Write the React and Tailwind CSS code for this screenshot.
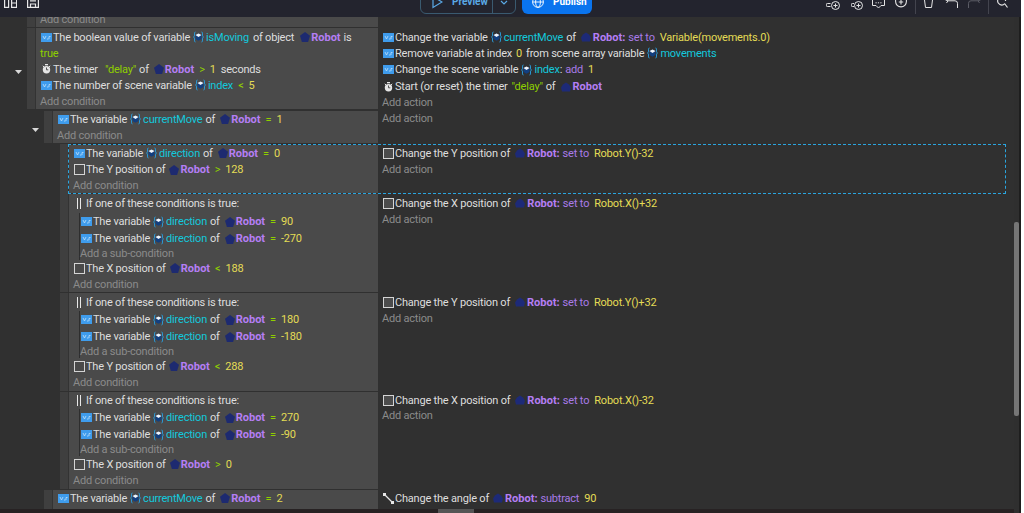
import React from "react";

const Var = () => (
  <svg width="11" height="9" viewBox="0 0 11 9" className="shrink-0 mr-[1px]">
    <rect width="11" height="9" fill="#3f9cec" />
    <path d="M2 3l1.500 3L5 3M6 6h1.500M8 6V3.500h1.500" fill="none" stroke="#bfe0fa" strokeWidth="0.8" />
  </svg>
);
const Brace = () => (
  <svg width="11" height="12" viewBox="0 0 11 12" className="shrink-0 ml-[3px] mr-[2px]">
    <path d="M2.500 1C1.200 1 1.500 2.500 1.500 4S1.200 5.600.5 6c.7.4 1 .5 1 2s-.3 3 1 3M8.500 1c1.300 0 1 1.500 1 3s.3 1.600 1 2c-.7.4-1 .5-1 2s.3 3-1 3" fill="none" stroke="#2a9ad8" strokeWidth="1" />
    <path d="M5.500 2.500 8.500 4v4l-3 1.800L2.500 8V4z" fill="#123f80" />
    <path d="M5.500 2.500 8.500 4 5.500 6 2.500 4z" fill="#f2f6fa" />
  </svg>
);
const Penta = () => (
  <svg width="10" height="10" viewBox="0 0 10 10" className="shrink-0 ml-[2px] mr-[1px]">
    <path d="M5 0 10 3.800 8.100 10H1.900L0 3.800z" fill="#1d2a70" />
  </svg>
);
const Blob = () => (
  <svg width="10" height="10" viewBox="0 0 10 10" className="shrink-0 mx-[2px]">
    <path d="M5 .5 8 2.500l2 3-1 4H1l-1-4 2-3z" fill="#1d2a78" />
  </svg>
);
const Timer = () => (
  <svg width="9" height="10" viewBox="0 0 9 10" className="shrink-0 ml-[1px] mr-[2px]">
    <circle cx="4.500" cy="5.800" r="3.700" fill="#e6e6e6" />
    <rect x="3" y="0" width="3" height="1.300" fill="#e6e6e6" />
    <path d="M.8 1.800 2 3M8.200 1.800 7 3" stroke="#e6e6e6" />
    <path d="M4.500 3.500v2.300h1.800" stroke="#555" fill="none" />
  </svg>
);
const Box = ({ grid }) => (
  <svg width="11" height="11" viewBox="0 0 11 11" className="shrink-0 mr-[1px]">
    {grid && <rect x="1" y="1" width="9" height="9" fill="#4c4c4c" />}
    <rect x="0.500" y="0.500" width="10" height="10" fill="none" stroke="#d4d4d4" />
  </svg>
);
const Angle = () => (
  <svg width="11" height="11" viewBox="0 0 11 11" className="shrink-0 mr-[1px]">
    <path d="M1.500 1.500 9.500 9.500" stroke="#e6e6e6" strokeWidth="1.200" />
    <rect x="0" y="0" width="3" height="3" fill="#e6e6e6" />
    <rect x="8" y="8" width="3" height="3" fill="#e6e6e6" />
  </svg>
);
const Arrow = ({ className }) => (
  <svg width="7" height="4" viewBox="0 0 7 4" className={`block ${className}`}>
    <path d="M0 0h7L3.500 4z" fill="#d8d8d8" />
  </svg>
);

const R = ({ colon }) => (
  <span className="font-bold tracking-normal text-[#b57ef5]">Robot{colon ? ":" : ""}</span>
);
const C = ({ children }) => <span className="text-[#13c8dc]">{children}</span>;
const Y = ({ children }) => <span className="text-[#e4dc55]">{children}</span>;
const Op = ({ children }) => <span className="text-[#8fcf00] mx-[5px]">{children}</span>;
const Str = () => <span className="text-[#8fcf00]">"delay"</span>;
const Of = () => <span className="mx-[3px]">of</span>;
const Act = ({ children }) => <span className="text-[#a97be8] ml-[3px] mr-[5px]">{children}</span>;

const Line = ({ h = 16, pl = 1, children, muted }) => (
  <div
    style={{ height: h, paddingLeft: pl }}
    className={`flex items-center whitespace-pre shrink-0 ${muted ? "text-[#8b8b8b]" : ""}`}
  >
    {children}
  </div>
);
const Muted = ({ h, children }) => (
  <Line h={h} pl={0} muted>{children}</Line>
);

const VarCond = ({ name, op, val }) => (
  <>
    <Var />
    <span>The variable</span>
    <Brace />
    <C>{name}</C>
    <Of />
    <Penta />
    <R />
    <Op>{op}</Op>
    <Y>{val}</Y>
  </>
);
const PosCond = ({ axis, op, val }) => (
  <>
    <Box />
    <span>The {axis} position of</span>
    <span className="w-[2px]" />
    <Penta />
    <R />
    <Op>{op}</Op>
    <Y>{val}</Y>
  </>
);
const PosAct = ({ axis, val }) => (
  <>
    <Box grid />
    <span>Change the {axis} position of</span>
    <span className="w-[3px]" />
    <Blob />
    <R colon />
    <Act>set to</Act>
    <Y>{val}</Y>
  </>
);

const Row = ({ left, conds, actions, h, gap = 1, selected, arrow }) => {
  const condW = 378 - left - 8;
  const body = (
    <>
      <div
        style={{ width: selected ? condW - 1 : condW, marginBottom: gap }}
        className={`shrink-0 bg-[#4a4a4a] flex flex-col overflow-hidden ${selected ? "" : "border-l border-[#333333]"}`}
      >
        {conds}
      </div>
      <div className="flex-1 flex flex-col pl-[4px] overflow-hidden min-w-0">{actions}</div>
    </>
  );
  return (
    <div style={{ height: h }} className="flex shrink-0">
      <div style={{ width: left }} className="shrink-0">{arrow}</div>
      <div style={{ marginBottom: gap }} className="w-[8px] shrink-0 bg-[#3f3f3f]" />
      {selected ? (
        <div className="flex-1 flex border border-dashed border-[#2aa5df] mr-[8px] min-w-0">{body}</div>
      ) : (
        body
      )}
    </div>
  );
};

const OrGroup = ({ first, af, last, a, b, c, d, op, actAxis, val }) => (
  <Row
    left={60}
    h={first + 17 + 17 + 13 + 16 + last + 1}
    conds={
      <div className="flex flex-col flex-1 pl-[4px]">
        <Line h={first}>
          <span className="w-[4px] h-[11px] border-x border-[#e8e8e8] ml-[3px] mr-[5px]" />
          <span>If one of these conditions is true:</span>
        </Line>
        <div className="border-l border-[#2e2e2e] ml-[6px] h-[47px]">
          <Line h={17}><VarCond name="direction" op="=" val={a} /></Line>
          <Line h={17}><VarCond name="direction" op="=" val={b} /></Line>
          <Muted h={13}>Add a sub-condition</Muted>
        </div>
        <Line h={16}><PosCond axis={c} op={op} val={d} /></Line>
        <Muted h={last}>Add condition</Muted>
      </div>
    }
    actions={
      <>
        <Line h={af}><PosAct axis={actAxis} val={val} /></Line>
        <Muted h={15}>Add action</Muted>
      </>
    }
  />
);

const App = () => (
  <div className="w-[1024px] h-[513px] overflow-hidden flex bg-white text-[#dedede] text-[11px] leading-none tracking-[-0.2px] font-['Roboto',sans-serif]">
    <div className="w-[1021px] h-full flex flex-col shrink-0 bg-[#303030]">
      <div className="h-[17px] shrink-0 bg-[#23242e] flex items-start overflow-hidden">
        <svg width="13" height="8" viewBox="0 0 13 8" className="ml-[4px] shrink-0" fill="none" stroke="#e8e8e8" strokeWidth="1.200">
          <path d="M.6 0v7.400h4V0M7.600 0v7.400h5V0M7.600 3h5" />
        </svg>
        <svg width="12" height="8" viewBox="0 0 12 8" className="ml-[10px] shrink-0" fill="none" stroke="#e8e8e8" strokeWidth="1.200">
          <path d="M.6 0v7.400h10.800V0M3.500 7.400V4h5v3.400M3 .8h6" />
        </svg>
        <div className="ml-[381px] -mt-[10px] w-[96px] h-[24px] shrink-0 border border-[#3a5a70] rounded-[6px] flex items-center">
          <svg width="11" height="14" viewBox="0 0 11 14" className="ml-[11px] shrink-0" fill="none" stroke="#5aa9e6" strokeWidth="1.200"><path d="M1 1.500 10 7 1 12.500z" /></svg>
          <span className="ml-[9px] w-[40px] font-bold tracking-normal text-[#5aa9e6] text-[10px]">Preview</span>
          <div className="w-px h-full bg-[#3a5a70]" />
          <svg width="8" height="5" viewBox="0 0 8 5" className="ml-[7px] shrink-0" fill="none" stroke="#5aa9e6" strokeWidth="1.200"><path d="M1 1l3 3 3-3" /></svg>
        </div>
        <div className="ml-[6px] -mt-[10px] w-[70px] h-[24px] shrink-0 bg-[#0a74ee] rounded-[6px] flex items-center">
          <svg width="12" height="12" viewBox="0 0 12 12" className="ml-[10px] shrink-0" fill="none" stroke="#fff" strokeWidth="0.9"><circle cx="6" cy="6" r="5.400" /><ellipse cx="6" cy="6" rx="2.400" ry="5.400" /><path d="M.6 6h10.800" /></svg>
          <span className="ml-[9px] font-bold tracking-normal text-white text-[10px]">Publish</span>
        </div>
        <svg width="14" height="9" viewBox="0 0 14 9" className="ml-[234px] mt-[1px] shrink-0" fill="none" stroke="#e4e4e4" strokeWidth="1"><path d="M4.500 2.500H1.500a1 1 0 0 0 0 3h3" /><circle cx="9.500" cy="4.500" r="4" /><path d="M7.500 4.500h4M9.500 2.500v4" /></svg>
        <svg width="12" height="9" viewBox="0 0 12 9" className="ml-[11px] mt-[1px] shrink-0" fill="none" stroke="#e4e4e4" strokeWidth="1"><path d="M3 2.500H1.500a1 1 0 0 0 0 3H3" /><circle cx="7.500" cy="4.500" r="4" /><path d="M5.500 4.500h4M7.500 2.500v4" /></svg>
        <svg width="13" height="9" viewBox="0 0 13 9" className="ml-[9px] shrink-0" fill="none" stroke="#e4e4e4" strokeWidth="1"><path d="M.5 0v5.500h3.500L6.500 8 9 5.500h3.500V0" /><path d="M3.500 2.800h1.200M5.900 2.800h1.200M8.300 2.800h1.200" /></svg>
        <svg width="12" height="8" viewBox="0 0 12 8" className="ml-[10px] shrink-0" fill="none" stroke="#e4e4e4" strokeWidth="1.100"><path d="M.6 0v1.500a5.400 5.400 0 0 0 10.800 0V0M6 0v4.500M3.800 2h4.400" /></svg>
        <div className="w-px h-[14px] bg-[#43444e] ml-[8px] shrink-0" />
        <svg width="9" height="8" viewBox="0 0 9 8" className="ml-[8px] shrink-0" fill="none" stroke="#e4e4e4" strokeWidth="1"><path d="M.5 0 1.500 7.500h6L8.500 0" /></svg>
        <svg width="13" height="8" viewBox="0 0 13 8" className="ml-[12px] shrink-0" fill="none" stroke="#e4e4e4" strokeWidth="1"><path d="M3 .8h7a2.500 2.500 0 0 1 2.500 2.500V8M.5 0 3 .8 1.500 3" /></svg>
        <svg width="13" height="8" viewBox="0 0 13 8" className="ml-[10px] shrink-0" fill="none" stroke="#5c5d66" strokeWidth="1"><path d="M.5 8V3.300A2.500 2.500 0 0 1 3 .8h7M12.500 0 10 .8 11.500 3" /></svg>
        <div className="w-px h-[14px] bg-[#43444e] ml-[7px] shrink-0" />
        <svg width="11" height="8" viewBox="0 0 11 8" className="ml-[8px] shrink-0" fill="none" stroke="#e4e4e4" strokeWidth="1.200"><path d="M.8 0a4 4 0 0 0 7 3.500M7.500 3.500 10.500 7.500M8.500 0v1" /></svg>
      </div>

      <div className="flex-1 flex min-h-0">
        <div className="w-[1014px] shrink-0 flex flex-col overflow-hidden bg-[#303030]">
          <div className="h-[11px] flex shrink-0 overflow-hidden">
            <div className="w-[27px] shrink-0" />
            <div className="w-[8px] h-[10px] bg-[#3f3f3f] shrink-0" />
            <div className="w-[343px] h-[10px] bg-[#4a4a4a] border-l border-[#333333] shrink-0 pl-[4px] flex flex-col justify-end">
              <Muted>Add condition</Muted>
            </div>
          </div>

          <Row
            left={27}
            gap={2}
            h={83}
            arrow={<Arrow className="ml-[15px] mt-[42px]" />}
            conds={
              <div className="pl-[4px] pt-[1px]">
                <Line><Var /><span>The boolean value of variable</span><Brace /><C>isMoving</C><span className="mx-[4px]">of object</span><Penta /><R /><span className="ml-[3px]">is</span></Line>
                <Line pl={0}><span className="text-[#8fcf00]">true</span></Line>
                <Line><Timer /><span>The timer</span><span className="w-[7px]" /><Str /><Of /><Penta /><R /><Op>&gt;</Op><Y>1</Y><span className="ml-[5px]">seconds</span></Line>
                <Line><Var /><span>The number of scene variable</span><Brace /><C>index</C><Op>&lt;</Op><Y>5</Y></Line>
                <Muted>Add condition</Muted>
              </div>
            }
            actions={
              <div className="pt-[1px]">
                <Line><Var /><span>Change the variable</span><Brace /><C>currentMove</C><Of /><Blob /><R colon /><Act>set to</Act><Y>Variable(movements.0)</Y></Line>
                <Line><Var /><span>Remove variable at index</span><span className="w-[4px]" /><Y>0</Y><span className="ml-[4px]">from scene array variable</span><Brace /><C>movements</C></Line>
                <Line h={17}><Var /><span>Change the scene variable</span><Brace /><C>index</C><span className="text-[#dedede]">:</span><Act>add</Act><Y>1</Y></Line>
                <Line h={17}><Timer /><span>Start (or reset) the timer</span><span className="w-[4px]" /><Str /><Of /><Blob /><R /></Line>
                <Muted h={15}>Add action</Muted>
              </div>
            }
          />

          <Row
            left={44}
            h={33}
            arrow={<Arrow className="ml-[32px] mt-[17px]" />}
            conds={
              <div className="pl-[4px]">
                <Line><VarCond name="currentMove" op="=" val="1" /></Line>
                <Muted>Add condition</Muted>
              </div>
            }
            actions={<Muted h={15}>Add action</Muted>}
          />

          <Row
            left={60}
            gap={0}
            h={50}
            selected
            conds={
              <div className="pl-[4px]">
                <Line><VarCond name="direction" op="=" val="0" /></Line>
                <Line h={17}><PosCond axis="Y" op=">" val="128" /></Line>
                <Muted h={15}>Add condition</Muted>
              </div>
            }
            actions={
              <>
                <Line><PosAct axis="Y" val="Robot.Y()-32" /></Line>
                <Muted>Add action</Muted>
              </>
            }
          />

          <OrGroup first={19} af={18} last={16} a="90" b="-270" c="X" op="<" d="188" actAxis="X" val="Robot.X()+32" />
          <OrGroup first={18} af={18} last={17} a="180" b="-180" c="Y" op="<" d="288" actAxis="Y" val="Robot.Y()+32" />
          <OrGroup first={17} af={16} last={17} a="270" b="-90" c="X" op=">" d="0" actAxis="X" val="Robot.X()-32" />

          <Row
            left={44}
            gap={0}
            h={19}
            conds={
              <div className="pl-[4px]">
                <Line><VarCond name="currentMove" op="=" val="2" /></Line>
              </div>
            }
            actions={
              <Line>
                <Angle />
                <span>Change the angle of</span>
                <span className="w-[2px]" />
                <Blob />
                <R colon />
                <Act>subtract</Act>
                <Y>90</Y>
              </Line>
            }
          />
          <div className="flex-1 bg-[#272223] flex min-h-[4px]">
            <div className="ml-[438px] w-[36px] bg-[#555555]" />
          </div>
        </div>
        <div className="w-[5px] shrink-0 bg-[#2f2f2f] pt-[205px]">
          <div className="h-[194px] bg-[#767676] rounded-[2px]" />
        </div>
        <div className="w-[2px] shrink-0 bg-[#1e1e1e]" />
      </div>
    </div>
  </div>
);

export default App;
